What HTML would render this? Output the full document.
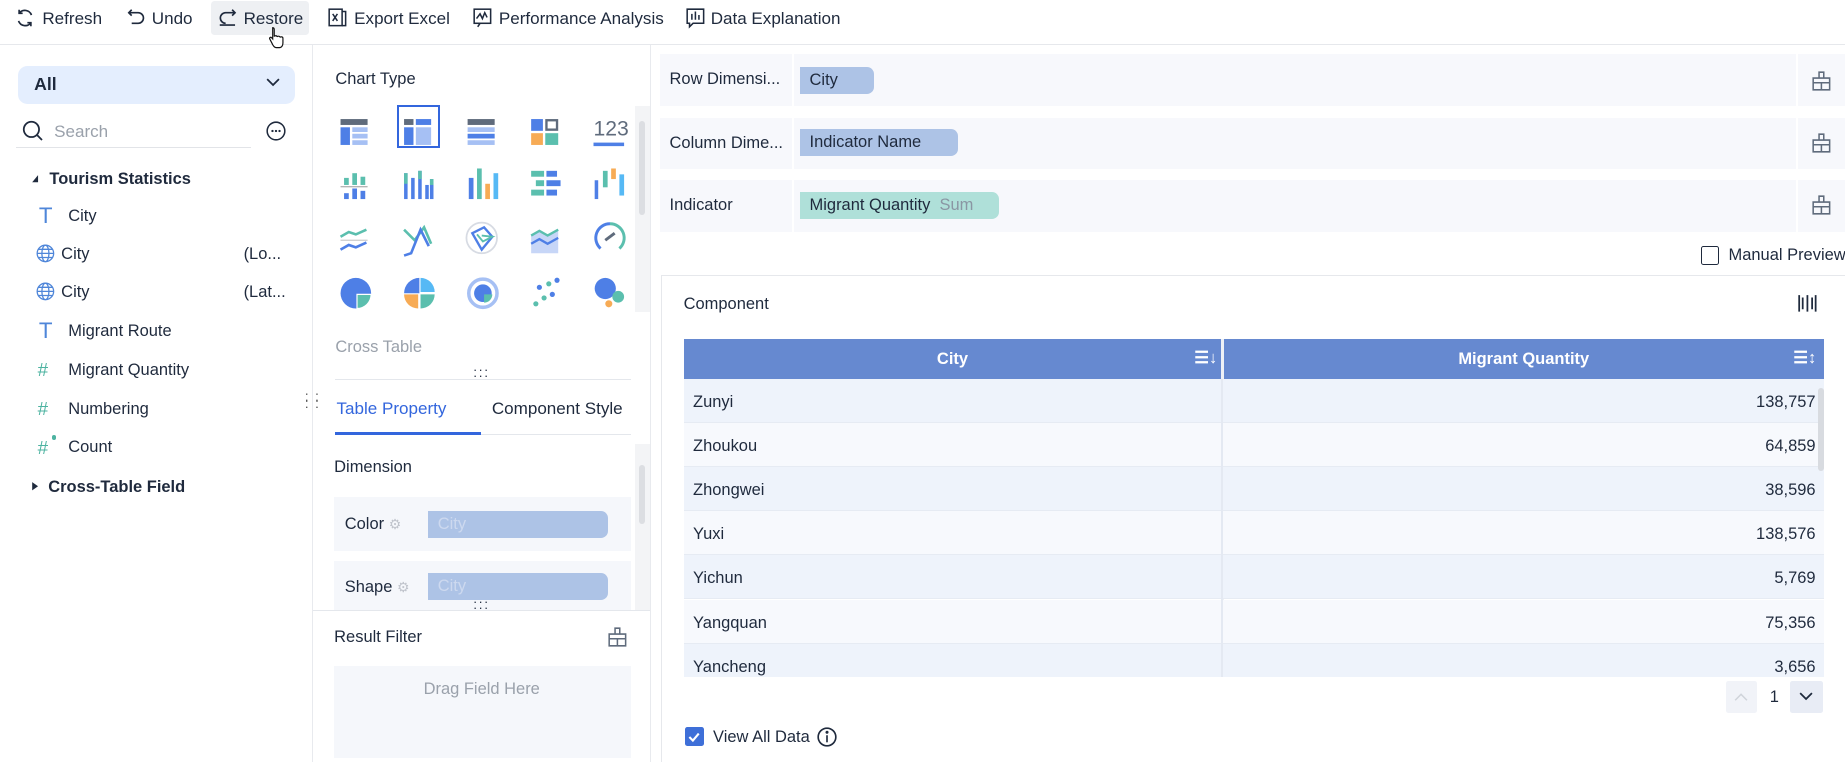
<!DOCTYPE html>
<html><head><meta charset="utf-8"><style>
*{box-sizing:border-box;margin:0;padding:0}
html,body{width:1845px;height:762px;overflow:hidden;background:#fff}
#w{zoom:1.17666;width:1568px;height:648px;position:relative;font-family:"Liberation Sans",Arial,sans-serif;color:#1f2a3d;font-size:14px}
.a{position:absolute}
.t{position:absolute;white-space:nowrap;line-height:18px}
svg{position:absolute;overflow:visible}
.pill{position:absolute;border-radius:0 6px 6px 0;line-height:23px;padding-left:8px;white-space:nowrap}
.row{position:absolute;left:0;width:969px;height:37.5px;border-bottom:1px solid #e6ebf3}
.row span{position:absolute;line-height:40px}
</style></head><body><div id="w">
<!-- toolbar -->
<div class="a" style="left:0;top:37px;width:1568px;height:1px;background:#e6e8ec"></div>
<div class="a" style="left:179px;top:1px;width:84px;height:29px;background:#eef0f3;border-radius:3px"></div>
<svg style="left:13px;top:7px" width="17" height="17" viewBox="0 0 17 17" fill="none" stroke="#1f2a3d" stroke-width="1.4"><path d="M14 6A6 6 0 0 0 3.5 4.5M3 11a6 6 0 0 0 10.5 1.5M3.5 1.5v3h3M13.5 15.5v-3h-3"/></svg>
<div class="t" style="left:36px;top:7px;font-size:14.5px">Refresh</div>
<svg style="left:108px;top:7px" width="16" height="16" viewBox="0 0 16 16" fill="none" stroke="#1f2a3d" stroke-width="1.4"><path d="M4 1.5L1.5 4 4 6.5M1.5 4h8a4.5 4.5 0 0 1 0 9H4"/></svg>
<div class="t" style="left:129px;top:7px;font-size:14.5px">Undo</div>
<svg style="left:185px;top:7px" width="16" height="16" viewBox="0 0 16 16" fill="none" stroke="#1f2a3d" stroke-width="1.4"><path d="M12 1.5L14.5 4 12 6.5M14.5 4h-8a4.5 4.5 0 0 0 0 9"/><path d="M1.5 14.5h13"/></svg>
<div class="t" style="left:207px;top:7px;font-size:14.5px">Restore</div>
<svg style="left:228px;top:22px" width="16" height="20" viewBox="0 0 16 20" fill="#fff" stroke="#111" stroke-width="1"><path d="M4 1.5c1 0 1.3.6 1.3 1.5v6c.3-1 2.5-1 2.5.3.3-1 2.5-.8 2.5.5.4-1 2.4-.7 2.4.6v4c0 2-1 4-3 4H7c-1.5 0-2-1-3-2.5L1.5 11c-.5-1 .7-2 1.6-1L4 11V3c0-1 0-1.5 0-1.5z"/></svg>
<svg style="left:279px;top:7px" width="16" height="17" viewBox="0 0 16 17" fill="none" stroke="#1f2a3d" stroke-width="1.3"><rect x="1" y="1" width="11" height="14"/><path d="M4 5l4 6M8 5l-4 6M12 3h3v12h-3"/></svg>
<div class="t" style="left:301px;top:7px;font-size:14.5px">Export Excel</div>
<svg style="left:402px;top:7px" width="16" height="17" viewBox="0 0 16 17" fill="none" stroke="#1f2a3d" stroke-width="1.3"><rect x="1" y="1" width="14" height="12"/><path d="M3 9l3-4 2 4 2-5 2 4M6 13l-2 3"/></svg>
<div class="t" style="left:424px;top:7px;font-size:14.5px">Performance Analysis</div>
<svg style="left:583px;top:7px" width="16" height="18" viewBox="0 0 16 18" fill="none" stroke="#1f2a3d" stroke-width="1.3"><path d="M1 1h14v12H6l-3 3v-3H1z"/><path d="M5 5v5M8 3v7M11 6v4"/></svg>
<div class="t" style="left:604px;top:7px;font-size:14.5px">Data Explanation</div>

<!-- left panel -->
<div class="a" style="left:265px;top:38px;width:1px;height:610px;background:#e8eaee"></div>
<div class="a" style="left:15px;top:56px;width:236px;height:32px;background:#e4eefe;border-radius:8px"></div>
<div class="t" style="left:29px;top:63px;font-weight:bold;font-size:15px">All</div>
<svg style="left:226px;top:66px" width="12" height="8" viewBox="0 0 12 8" fill="none" stroke="#1f2a3d" stroke-width="1.5"><path d="M1 1l5 5 5-5"/></svg>
<svg style="left:19px;top:102px" width="18" height="18" viewBox="0 0 18 18" fill="none" stroke="#1f2a3d" stroke-width="1.5"><circle cx="8" cy="8" r="6.5"/><path d="M13 13l4 4"/></svg>
<div class="t" style="left:46px;top:103px;color:#9aa1ab;font-size:14.5px">Search</div>
<div class="a" style="left:14px;top:125px;width:199px;height:1px;background:#e2e4e8"></div>
<svg style="left:226px;top:103px" width="17" height="17" viewBox="0 0 17 17"><circle cx="8.5" cy="8.5" r="7.5" fill="none" stroke="#1f2a3d" stroke-width="1.3"/><circle cx="5.5" cy="8.5" r="1" fill="#1f2a3d"/><circle cx="8.5" cy="8.5" r="1" fill="#1f2a3d"/><circle cx="11.5" cy="8.5" r="1" fill="#1f2a3d"/></svg>
<svg style="left:26px;top:148px" width="8" height="8" viewBox="0 0 8 8"><path d="M6 1v6H1z" fill="#1f2a3d"/></svg>
<div class="t" style="left:42px;top:144px;font-weight:bold;font-size:14px">Tourism Statistics</div>
<div class="t" style="left:33px;top:174px;color:#4f86d9;font-size:19px">T</div>
<div class="t" style="left:58px;top:175px">City</div>
<svg style="left:31px;top:207px" width="16" height="16" viewBox="0 0 16 16" fill="none" stroke="#4f86d9" stroke-width="1.1"><circle cx="8" cy="8" r="7"/><ellipse cx="8" cy="8" rx="3" ry="7"/><path d="M1 8h14M2 4.5h12M2 11.5h12"/></svg>
<div class="t" style="left:52px;top:207px">City</div><div class="t" style="left:207px;top:207px">(Lo...</div>
<svg style="left:31px;top:240px" width="16" height="16" viewBox="0 0 16 16" fill="none" stroke="#4f86d9" stroke-width="1.1"><circle cx="8" cy="8" r="7"/><ellipse cx="8" cy="8" rx="3" ry="7"/><path d="M1 8h14M2 4.5h12M2 11.5h12"/></svg>
<div class="t" style="left:52px;top:240px">City</div><div class="t" style="left:207px;top:240px">(Lat...</div>
<div class="t" style="left:33px;top:272px;color:#4f86d9;font-size:19px">T</div>
<div class="t" style="left:58px;top:273px">Migrant Route</div>
<div class="t" style="left:32px;top:305px;color:#4db3a1;font-size:16px">#</div>
<div class="t" style="left:58px;top:306px">Migrant Quantity</div>
<div class="t" style="left:32px;top:338px;color:#4db3a1;font-size:16px">#</div>
<div class="t" style="left:58px;top:339px">Numbering</div>
<div class="t" style="left:32px;top:371px;color:#4db3a1;font-size:16px">#</div><div class="a" style="left:44px;top:370px;width:4px;height:4px;border-radius:2px;background:#4db3a1"></div>
<div class="t" style="left:58px;top:371px">Count</div>
<svg style="left:26px;top:409px" width="8" height="9" viewBox="0 0 8 9"><path d="M1 1l5 3.5L1 8z" fill="#1f2a3d"/></svg>
<div class="t" style="left:41px;top:405px;font-weight:bold;font-size:14px">Cross-Table Field</div>
<div class="t" style="left:259px;top:334px;color:#555;font-size:12px;line-height:6px;letter-spacing:1px">: :<br>: :</div>

<!-- middle panel -->
<div class="a" style="left:552px;top:38px;width:1px;height:610px;background:#e8eaee"></div>
<div class="t" style="left:285px;top:59px">Chart Type</div>
<div class="a" style="left:337px;top:89px;width:37px;height:37px;border:2px solid #3366dd"></div>
<div class="a" style="left:540px;top:90px;width:12px;height:175px;background:#f3f4f6"></div>
<div class="a" style="left:543px;top:103px;width:5px;height:80px;background:#dcdee2;border-radius:3px"></div>
<svg style="left:286px;top:95px" width="260" height="170" viewBox="0 0 260 170">
<g transform="translate(3,6)"><rect width="23" height="5" fill="#5f6b7c"/><rect y="7" width="8" height="15" fill="#4e7fe6"/><rect x="10" y="7" width="13" height="4" fill="#a6c0f4"/><rect x="10" y="12.5" width="13" height="4" fill="#a6c0f4"/><rect x="10" y="18" width="13" height="4" fill="#a6c0f4"/></g>
<g transform="translate(57,6)"><rect width="8" height="5" fill="#5f6b7c"/><rect x="10" width="13" height="5" fill="#4e7fe6"/><rect y="7" width="8" height="15" fill="#4e7fe6"/><rect x="10" y="7" width="13" height="15" fill="#a6c0f4"/></g>
<g transform="translate(111,6)"><rect width="23" height="5" fill="#5f6b7c"/><rect y="7" width="23" height="4" fill="#a6c0f4"/><rect y="12.5" width="23" height="4" fill="#4e7fe6"/><rect y="18" width="23" height="4" fill="#a6c0f4"/></g>
<g transform="translate(165,6)"><rect width="10" height="10" fill="#4e7fe6"/><rect x="13" y="1" width="9" height="8" fill="none" stroke="#5f6b7c" stroke-width="2"/><rect y="12" width="10" height="10" fill="#f7ab55"/><rect x="12" y="12" width="11" height="10" fill="#5bbfae"/></g>
<text x="218" y="20" font-size="18" fill="#5f6b7c" font-family="Liberation Sans">123</text><rect x="218" y="26" width="26" height="3" fill="#4e7fe6"/>
<g transform="translate(3,52)"><rect x="3" y="4" width="4" height="6" fill="#5bbfae"/><rect x="10" y="0" width="4" height="10" fill="#5bbfae"/><rect x="17" y="3" width="4" height="7" fill="#5bbfae"/><rect y="11" width="23" height="1" fill="#aaa"/><rect x="3" y="17" width="4" height="5" fill="#4e7fe6"/><rect x="10" y="13" width="4" height="9" fill="#4e7fe6"/><rect x="17" y="15" width="4" height="7" fill="#4e7fe6"/></g>
<g transform="translate(57,52)"><rect x="0" y="0" width="3" height="22" fill="#4e7fe6"/><rect x="0" y="0" width="3" height="9" fill="#5bbfae"/><rect x="6" y="4" width="3" height="18" fill="#4e7fe6"/><rect x="12" y="-2" width="3" height="24" fill="#4e7fe6"/><rect x="12" y="-2" width="3" height="7" fill="#5bbfae"/><rect x="18" y="10" width="3" height="12" fill="#4e7fe6"/><rect x="22" y="5" width="3" height="17" fill="#4e7fe6"/><rect x="22" y="5" width="3" height="5" fill="#5bbfae"/></g>
<g transform="translate(112,48)"><rect x="0" y="8" width="4" height="18" fill="#4e7fe6"/><rect x="7" y="0" width="4" height="26" fill="#5bbfae"/><rect x="14" y="13" width="4" height="13" fill="#f7ab55"/><rect x="21" y="4" width="4" height="22" fill="#56b9f5"/></g>
<g transform="translate(165,50)"><rect x="0" y="0" width="11" height="5" fill="#5bbfae"/><rect x="13" y="0" width="9" height="5" fill="#4e7fe6"/><rect x="4" y="8" width="7" height="5" fill="#5bbfae"/><rect x="13" y="8" width="12" height="5" fill="#4e7fe6"/><rect x="0" y="16" width="11" height="5" fill="#5bbfae"/><rect x="13" y="16" width="9" height="5" fill="#4e7fe6"/></g>
<g transform="translate(219,48)"><rect x="0" y="10" width="3" height="16" fill="#4e7fe6"/><rect x="7" y="2" width="4" height="14" fill="#5bbfae"/><rect x="14" y="0" width="4" height="9" fill="#f7ab55"/><rect x="21" y="5" width="4" height="18" fill="#56b9f5"/></g>
<g transform="translate(3,98)" fill="none" stroke-width="2.2"><path d="M0 8l7-4 6 2 9-4" stroke="#5bbfae"/><path d="M0 19l7-4 6 2 9-4" stroke="#4e7fe6"/><path d="M0 11h23" stroke="#ccc" stroke-width="1"/></g>
<g transform="translate(57,96)" fill="none" stroke-width="2.2"><path d="M0 4l9 9 8-11 6 14" stroke="#5bbfae"/><path d="M0 26l6-2 8-20 7 14" stroke="#4e7fe6"/></g>
<g transform="translate(110,94)" fill="none"><circle cx="13" cy="13" r="13" stroke="#d7dbe3" stroke-width="1.5"/><path d="M5 9l10-5 7 8-9 11z" stroke="#4e7fe6" stroke-width="2"/><path d="M9 10l5 6 8-4-9-1" stroke="#5bbfae" stroke-width="1.6"/></g>
<g transform="translate(165,97)"><path d="M0 8l7-4 7 4 9-5v20H0z" fill="#c7d6f7"/><path d="M0 8l7-4 7 4 9-5" stroke="#5bbfae" stroke-width="2" fill="none"/><path d="M0 15l7-4 7 4 9-5" stroke="#4e7fe6" stroke-width="2" fill="none"/></g>
<g transform="translate(219,94)" fill="none" stroke-width="2.5"><path d="M5 22A12 12 0 0 1 13 1" stroke="#4e7fe6"/><path d="M13 1A12 12 0 0 1 21 22" stroke="#5bbfae"/><path d="M9 15l8-6" stroke="#5f6b7c" stroke-width="2.5"/></g>
<g transform="translate(3,141)"><circle cx="13" cy="13" r="13" fill="#4e7fe6"/><path d="M14 14h12a12 12 0 0 1-12 12z" fill="#5bbfae" stroke="#fff" stroke-width="1"/></g>
<g transform="translate(57,141)"><path d="M13 13V0A13 13 0 0 0 0 13z" fill="#4e7fe6"/><path d="M14 12V0A12 12 0 0 1 26 12z" fill="#56b9f5"/><path d="M12 14H0A12 12 0 0 0 12 26z" fill="#f7ab55"/><path d="M14 14h12A12 12 0 0 1 14 26z" fill="#5bbfae"/></g>
<g transform="translate(111,141)"><circle cx="13" cy="13" r="12" fill="none" stroke="#a6c0f4" stroke-width="3"/><circle cx="13" cy="13" r="7.5" fill="#4e7fe6"/><path d="M14 14h7a7 7 0 0 1-7 7z" fill="#5bbfae"/></g>
<g transform="translate(165,141)" fill="#5bbfae"><circle cx="22" cy="2" r="2.2" fill="#4e7fe6"/><circle cx="15" cy="5" r="2.2"/><circle cx="7" cy="8" r="2.2" fill="#4e7fe6"/><circle cx="18" cy="14" r="2.2" fill="#4e7fe6"/><circle cx="11" cy="17" r="2.2"/><circle cx="4" cy="22" r="2.2"/></g>
<g transform="translate(219,141)"><circle cx="9" cy="9" r="9" fill="#4e7fe6"/><circle cx="20" cy="16" r="5" fill="#5bbfae"/><circle cx="12" cy="22" r="3" fill="#f7ab55"/></g>
</svg>
<div class="t" style="left:285px;top:286px;color:#9aa1ab">Cross Table</div>
<div class="a" style="left:285px;top:322px;width:251px;height:1px;background:#e4e7ec"></div>
<div class="t" style="left:402px;top:312px;font-size:11px;line-height:5px;letter-spacing:1px">···<br>···</div>
<div class="t" style="left:286px;top:338px;color:#3366dd;font-size:14.5px">Table Property</div>
<div class="t" style="left:418px;top:338px;font-size:14.5px">Component Style</div>
<div class="a" style="left:285px;top:369px;width:251px;height:1px;background:#e4e7ec"></div>
<div class="a" style="left:285px;top:367px;width:124px;height:3px;background:#3366dd"></div>
<div class="a" style="left:540px;top:377px;width:12px;height:141px;background:#f3f4f6"></div>
<div class="a" style="left:543px;top:395px;width:5px;height:50px;background:#dcdee2;border-radius:3px"></div>
<div class="t" style="left:284px;top:388px">Dimension</div>
<div class="a" style="left:284px;top:422px;width:252px;height:46px;background:#f5f7fb"></div>
<div class="t" style="left:293px;top:437px">Color <span style="color:#c0c4cc;font-size:12px">⚙</span></div>
<div class="pill" style="left:364px;top:434px;width:153px;height:23px;background:#adc3e6;color:#cdd9ef">City</div>
<div class="a" style="left:284px;top:477px;width:252px;height:42px;background:#f5f7fb"></div>
<div class="t" style="left:293px;top:490px">Shape <span style="color:#c0c4cc;font-size:12px">⚙</span></div>
<div class="pill" style="left:364px;top:487px;width:153px;height:23px;background:#adc3e6;color:#cdd9ef">City</div>
<div class="a" style="left:266px;top:518px;width:286px;height:1px;background:#e4e7ec"></div>
<div class="t" style="left:402px;top:509px;font-size:11px;line-height:5px;letter-spacing:1px">···<br>···</div>
<div class="t" style="left:284px;top:533px">Result Filter</div>
<svg style="left:517px;top:533px" width="16" height="17" viewBox="0 0 16 17" fill="none" stroke="#5f6b7c" stroke-width="1.3"><path d="M6 1h4v5H6zM1 6h14v10H1zM1 10h14M8 10v6"/></svg>
<div class="a" style="left:284px;top:566px;width:252px;height:78px;background:#f5f7fb"></div>
<div class="t" style="left:360px;top:577px;color:#9aa1ab">Drag Field Here</div>

<!-- right -->
<div class="a" style="left:561px;top:46px;width:1007px;height:44px;background:#f7f8fc"></div>
<div class="a" style="left:561px;top:100px;width:1007px;height:44px;background:#f7f8fc"></div>
<div class="a" style="left:561px;top:153px;width:1007px;height:44px;background:#f7f8fc"></div>
<div class="a" style="left:673px;top:46px;width:2px;height:151px;background:#fff"></div>
<div class="a" style="left:1526px;top:46px;width:2px;height:151px;background:#fff"></div>
<div class="a" style="left:561px;top:90px;width:1007px;height:10px;background:#fff"></div>
<div class="a" style="left:561px;top:144px;width:1007px;height:9px;background:#fff"></div>
<div class="t" style="left:569px;top:59px">Row Dimensi...</div>
<div class="t" style="left:569px;top:113px">Column Dime...</div>
<div class="t" style="left:569px;top:166px">Indicator</div>
<div class="pill" style="left:680px;top:57px;width:63px;height:23px;background:#adc3e6">City</div>
<div class="pill" style="left:680px;top:110px;width:134px;height:23px;background:#adc3e6">Indicator Name</div>
<div class="pill" style="left:680px;top:163px;width:169px;height:23px;background:#afe0d9">Migrant Quantity <span style="color:#8a96a3">&nbsp;Sum</span></div>
<svg style="left:1540px;top:60px" width="16" height="17" viewBox="0 0 16 17" fill="none" stroke="#5f6b7c" stroke-width="1.3"><path d="M6 1h4v5H6zM1 6h14v10H1zM1 10h14M8 10v6"/></svg>
<svg style="left:1540px;top:113px" width="16" height="17" viewBox="0 0 16 17" fill="none" stroke="#5f6b7c" stroke-width="1.3"><path d="M6 1h4v5H6zM1 6h14v10H1zM1 10h14M8 10v6"/></svg>
<svg style="left:1540px;top:166px" width="16" height="17" viewBox="0 0 16 17" fill="none" stroke="#5f6b7c" stroke-width="1.3"><path d="M6 1h4v5H6zM1 6h14v10H1zM1 10h14M8 10v6"/></svg>
<div class="a" style="left:1446px;top:209px;width:15px;height:16px;border:1.3px solid #1f2a3d;border-radius:2px"></div>
<div class="t" style="left:1469px;top:208px">Manual Preview</div>
<div class="a" style="left:562px;top:234px;width:1010px;height:420px;border:1px solid #e6e8ec"></div>
<div class="t" style="left:581px;top:250px">Component</div>
<svg style="left:1528px;top:250px" width="17" height="16" viewBox="0 0 17 16" stroke="#1f2a3d" stroke-width="1.5"><path d="M1 1v14M4 3v10M8 1v14M12 3v10M15 1v14"/></svg>
<div class="a" style="left:581px;top:288px;width:969px;height:287px;overflow:hidden">
 <div class="a" style="left:0;top:0;width:969px;height:34px;background:#6689d0"></div>
 <div class="a" style="left:457px;top:0;width:2px;height:287px;background:#eef1f6"></div>
 <div class="t" style="left:0;top:9px;width:457px;text-align:center;color:#fff;font-weight:bold">City</div>
 <div class="t" style="left:459px;top:9px;width:510px;text-align:center;color:#fff;font-weight:bold">Migrant Quantity</div>
 <div class="t" style="left:434px;top:8px;color:#fff;font-size:14px;font-weight:bold">☰↓</div>
 <div class="t" style="left:943px;top:8px;color:#fff;font-size:14px;font-weight:bold">☰↕</div>
 <div class="row" style="top:34px;background:#eef3fb"><span style="left:8px">Zunyi</span><span style="right:7px">138,757</span></div>
 <div class="row" style="top:71.5px;background:#f7f9fd"><span style="left:8px">Zhoukou</span><span style="right:7px">64,859</span></div>
 <div class="row" style="top:109px;background:#eef3fb"><span style="left:8px">Zhongwei</span><span style="right:7px">38,596</span></div>
 <div class="row" style="top:146.5px;background:#f7f9fd"><span style="left:8px">Yuxi</span><span style="right:7px">138,576</span></div>
 <div class="row" style="top:184px;background:#eef3fb"><span style="left:8px">Yichun</span><span style="right:7px">5,769</span></div>
 <div class="row" style="top:221.5px;background:#f7f9fd"><span style="left:8px">Yangquan</span><span style="right:7px">75,356</span></div>
 <div class="row" style="top:259px;background:#eef3fb"><span style="left:8px">Yancheng</span><span style="right:7px">3,656</span></div>
 <div class="a" style="left:457px;top:34px;width:1px;height:253px;background:#e4e9f2"></div>
 <div class="a" style="left:964px;top:42px;width:5px;height:70px;background:#d8dbe0;border-radius:3px"></div>
</div>
<div class="a" style="left:1467px;top:579px;width:26px;height:27px;background:#f1f3f8;border-radius:2px"></div>
<svg style="left:1474px;top:588px" width="12" height="8" viewBox="0 0 12 8" fill="none" stroke="#d0d4da" stroke-width="1.3"><path d="M1 7l5-5 5 5"/></svg>
<div class="t" style="left:1504px;top:584px">1</div>
<div class="a" style="left:1521px;top:579px;width:28px;height:27px;background:#e8ecf5;border-radius:2px"></div>
<svg style="left:1529px;top:588px" width="12" height="8" viewBox="0 0 12 8" fill="none" stroke="#1f2a3d" stroke-width="1.5"><path d="M1 1l5 5 5-5"/></svg>
<div class="a" style="left:582px;top:618px;width:16px;height:16px;background:#3e6fd8;border-radius:2px"></div>
<svg style="left:584px;top:620px" width="12" height="12" viewBox="0 0 12 12" fill="none" stroke="#fff" stroke-width="1.8"><path d="M2 6l3 3 5-6"/></svg>
<div class="t" style="left:606px;top:618px">View All Data</div>
<svg style="left:694px;top:618px" width="17" height="17" viewBox="0 0 17 17" fill="none" stroke="#1f2a3d" stroke-width="1.4"><circle cx="8.5" cy="8.5" r="7.5"/><path d="M8.5 7v6"/><circle cx="8.5" cy="4.5" r=".6" fill="#1f2a3d"/></svg>
</div></body></html>
